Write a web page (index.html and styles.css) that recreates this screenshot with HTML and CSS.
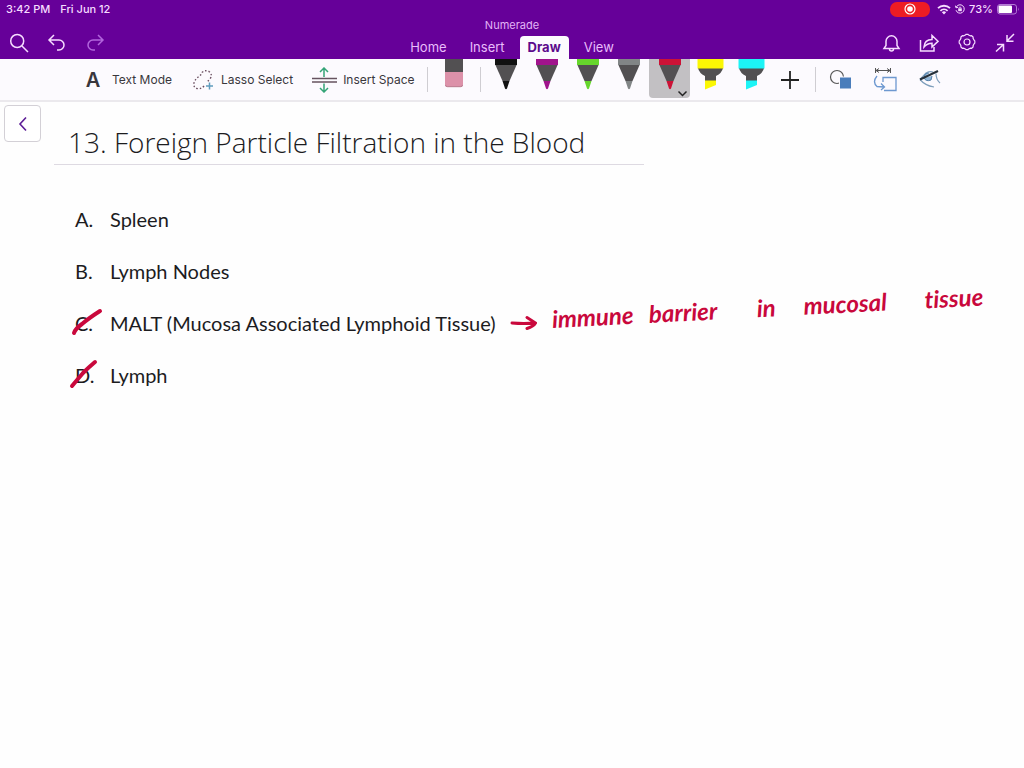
FILE: index.html
```
<!DOCTYPE html>
<html lang="en">
<head>
    <meta charset="UTF-8">
    <meta name="viewport" content="width=device-width, initial-scale=1.0">
    <title>Numerade</title>
    <link rel="stylesheet" href="styles.css">
</head>
<body>
    <header class="header">
        <div class="status">
            <span>3:42 PM</span>
            <span>Fri Jun 12</span>
            <div class="status-right">
                <span class="recording">
                    <svg width="12" height="12" viewBox="0 0 12 12"><circle cx="6" cy="6" r="5" fill="none" stroke="#fff" stroke-width="1.2"/><circle cx="6" cy="6" r="2.8" fill="#fff"/></svg>
                </span>
                <svg width="14" height="11" viewBox="0 0 14 11" fill="none" stroke="#f6dcff" stroke-width="1.8"><path d="M1 4.2a8.6 8.6 0 0 1 12 0M3.4 6.8a5.2 5.2 0 0 1 7.2 0"/><path d="M4.9 8.2 7 10.6l2.1-2.4a3 3 0 0 0-4.2 0z" fill="#f6dcff" stroke="none"/></svg>
                <svg width="10" height="10" viewBox="0 0 10 10" fill="none" stroke="#f6dcff"><path d="M1.2 3.2a4.2 4.2 0 1 1-.2 3M.4 1.6l.6 2.2 2-.5"/><rect x="3.2" y="4.4" width="3.6" height="2.8" fill="#f6dcff" stroke="none"/><path d="M4 4.6V4a1 1 0 0 1 2 0v.6" stroke-width=".8"/></svg>
                <span>73%</span>
                <svg width="23" height="11" viewBox="0 0 23 11"><rect x=".5" y=".5" width="19" height="9.500" rx="2.500" fill="none" stroke="#b47ad6"/><rect x="1.500" y="1.500" width="13.500" height="7.500" rx="1" fill="#fff"/><path d="M21 3.500q1.500 1.700 0 3.500z" fill="#b47ad6"/></svg>
            </div>
        </div>
        <div class="nav">
            <div class="nav-icons">
                <button class="icon-button" aria-label="Search">
                    <svg width="20" height="20" viewBox="0 0 20 20"><circle cx="8.200" cy="8" r="6.500"/><path d="m13 13 6 6"/></svg>
                </button>
                <button class="icon-button" aria-label="Undo">
                    <svg width="20" height="20" viewBox="0 0 20 20"><path d="M7 2 2 7l5 5M2.300 7H12a5 5 0 0 1 0 10h-2"/></svg>
                </button>
                <button class="icon-button dim" aria-label="Redo">
                    <svg width="20" height="20" viewBox="0 0 20 20"><path d="m13 2 5 5-5 5M17.700 7H8a5 5 0 0 0 0 10h2"/></svg>
                </button>
            </div>
            <div class="nav-center">
                <div class="notebook">Numerade</div>
                <nav class="tabs">
                    <button class="tab">Home</button>
                    <button class="tab">Insert</button>
                    <button class="tab active">Draw</button>
                    <button class="tab">View</button>
                </nav>
            </div>
            <div class="nav-icons right">
                <button class="icon-button" aria-label="Notifications">
                    <svg width="20" height="20" viewBox="0 0 20 20"><path d="M3 15.500h15l-2-3V8.300a5.500 5.500 0 0 0-11 0v4.200zM8.500 16a2 2 0 0 0 4 0"/></svg>
                </button>
                <button class="icon-button" aria-label="Share">
                    <svg width="20" height="20" viewBox="0 0 20 20"><path d="M1.500 7v11h13.500v-4M5 14q.5-7.500 8-7.500V2.500l6 5.800-6 5.700v-3.800q-5 0-8 3.800z"/></svg>
                </button>
                <button class="icon-button" aria-label="Settings">
                    <svg width="20" height="20" viewBox="0 0 20 20" class="thin"><path d="m8.300 2.100.7-.8h2l.7.8 1.800.7 1.100-.1 1.500 1.400v1.200l.8 1.700.9.900v2.200l-.9.900-.8 1.700v1.200l-1.500 1.400-1.100-.1-1.800.7-.7.800H9l-.7-.8-1.800-.7-1.100.1-1.500-1.400v-1.200l-.8-1.700-.9-.9V7.900l.9-.9.8-1.700V4.100l1.500-1.400 1.100.1z"/><circle cx="10" cy="9" r="3"/></svg>
                </button>
                <button class="icon-button" aria-label="Exit full screen">
                    <svg width="20" height="20" viewBox="0 0 20 20"><path d="M19 1l-7 7M12 2v6.300h6.500M1 18.500l7.500-7M2 11.500h6.500v7"/></svg>
                </button>
            </div>
        </div>
    </header>

    <div class="toolbar">
        <button class="tool"><span class="letter">A</span>Text Mode</button>
        <button class="tool">
            <svg width="25" height="24" viewBox="0 0 25 24"><path d="M14 18q-3 3.500-7 2.500-4-1.500-3-5.500 1-4 5-6.500 2-1.500 3-4 3-3 7-1 4 3 1 7.500-1.500 1.500-3 3" fill="none" stroke="#6b4f60" stroke-width="1.400" stroke-dasharray="1.500 2"/><path d="M16 18h7M19.500 14.500v7" stroke="#5f9cbd" stroke-width="1.500"/></svg>
            Lasso Select
        </button>
        <button class="tool">
            <svg width="26" height="26" viewBox="0 0 26 26" fill="none"><path d="M1 11.500h25M1 15h25" stroke="#66535f" stroke-width="1.300"/><path d="M13 10V1M9 5l4-4 4 4M13 16.500V25M9 21l4 4 4-4" stroke="#35a477" stroke-width="1.500"/></svg>
            Insert Space
        </button>
        <div class="divider"></div>
        <button class="pen eraser" aria-label="Eraser">
            <svg width="20" height="39" viewBox="0 0 20 39"><path d="M1 0h18v13H1z" fill="#525052"/><path d="M1 13h18v12.500q0 2.500-2.500 2.500h-13Q1 28 1 25.500z" fill="#dc91a9"/><path d="M1.500 26q0 1.700 2 1.700h13q2 0 2-1.700" fill="none" stroke="#b97f91"/></svg>
        </button>
        <div class="divider"></div>
        <div class="pens">
            <button class="pen black" aria-label="Black pen">
                <svg width="41" height="39" viewBox="0 0 41 39"><path class="barrel" d="M10 5h22l-7.500 17h-7z"/><path class="ink" d="M10 0h22v6H10zM17.500 22h7L22 29.500q-1 1.500-2 0z"/></svg>
            </button>
            <button class="pen purple" aria-label="Purple pen">
                <svg width="41" height="39" viewBox="0 0 41 39"><path class="barrel" d="M10 5h22l-7.500 17h-7z"/><path class="ink" d="M10 0h22v6H10zM17.500 22h7L22 29.500q-1 1.500-2 0z"/></svg>
            </button>
            <button class="pen green" aria-label="Green pen">
                <svg width="41" height="39" viewBox="0 0 41 39"><path class="barrel" d="M10 5h22l-7.500 17h-7z"/><path class="ink" d="M10 0h22v6H10zM17.500 22h7L22 29.500q-1 1.500-2 0z"/></svg>
            </button>
            <button class="pen gray" aria-label="Gray pen">
                <svg width="41" height="39" viewBox="0 0 41 39"><path class="barrel" d="M10 5h22l-7.500 17h-7z"/><path class="ink" d="M10 0h22v6H10zM17.500 22h7L22 29.500q-1 1.500-2 0z"/></svg>
            </button>
            <button class="pen red selected" aria-label="Red pen">
                <svg width="41" height="39" viewBox="0 0 41 39"><path class="barrel" d="M10 5h22l-7.500 17h-7z"/><path class="ink" d="M10 0h22v6H10zM17.500 22h7L22 29.500q-1 1.500-2 0z"/><path d="m29.500 32.500 4 4 4-4" fill="none" stroke="#222" stroke-width="1.500"/></svg>
            </button>
            <button class="pen yellow" aria-label="Yellow highlighter">
                <svg width="41" height="39" viewBox="0 0 41 39"><path class="barrel" d="M8 9h25q-1 5-7 8v5H15v-5q-6-3-7-8z"/><path class="ink" d="M7.500 0h26v9.500h-26zM15 21.500h11V26l-11 4.500z"/></svg>
            </button>
            <button class="pen cyan" aria-label="Cyan highlighter">
                <svg width="41" height="39" viewBox="0 0 41 39"><path class="barrel" d="M8 9h25q-1 5-7 8v5H15v-5q-6-3-7-8z"/><path class="ink" d="M7.500 0h26v9.500h-26zM15 21.500h11V26l-11 4.500z"/></svg>
            </button>
        </div>
        <button class="tool add" aria-label="Add pen">
            <svg width="20" height="20" viewBox="0 0 20 20"><path d="M10 1v18M1 10h18" stroke="#222" stroke-width="1.800"/></svg>
        </button>
        <div class="divider"></div>
        <div class="extras">
            <button class="tool" aria-label="Ink to shape">
                <svg width="24" height="24" viewBox="0 0 24 24"><circle cx="9" cy="9" r="6.500" fill="none" stroke="#555" stroke-width="1.200"/><path d="M11 8.500h12v12H11z" fill="#fcfafe"/><path d="M12 9.500h11v11H12z" fill="#4a7dbb"/></svg>
            </button>
            <button class="tool" aria-label="Ink to text">
                <svg width="24" height="24" viewBox="0 0 24 24" fill="none"><path d="M2.500 2.500h15M2.500 0v5M17.500 0v5M6 .5l-3 2 3 2M14 .5l3 2-3 2" stroke="#555"/><path d="M10 14V9.500h13v13H11M4 8q-5 6 0 10.500l7 .5M8 15.500l3.500 3.500-3.500 3" stroke="#6d98d0" stroke-width="1.300"/></svg>
            </button>
            <button class="tool" aria-label="Ink replay">
                <svg width="24" height="24" viewBox="0 0 24 24" fill="none"><path d="M2 11.500 8 5q4-2 7-1M2 11.500q5 6 14 7.500M18 5.500q0 6 4 9.500" stroke="#7d9dbb" stroke-width="1.200"/><path d="M6 10q0-5 5-5M6 10q2 4 7 2l1-4" fill="#8fb4d6" stroke="#4f7ea9"/><path d="M2 11.500 20 3" stroke="#26303a" stroke-width="2"/></svg>
            </button>
        </div>
    </div>

    <main class="page">
        <button class="back" aria-label="Show pages">
            <svg width="10" height="16" viewBox="0 0 10 16"><path d="M8 1.500 2 8l6 6.500" fill="none" stroke="#5c1c96" stroke-width="1.600"/></svg>
        </button>
        <div class="note">
            <h1>13. Foreign Particle Filtration in the Blood</h1>
            <ol class="options">
                <li><span class="mark">A.</span>Spleen</li>
                <li><span class="mark">B.</span>Lymph Nodes</li>
                <li>
                    <span class="mark">C.<svg class="strike" width="36" height="32" viewBox="0 0 36 32"><path d="M5 28q1-4 8-9 7-6 18-13"/></svg></span>MALT (Mucosa Associated Lymphoid Tissue)
                    <svg class="arrow" width="27" height="16" viewBox="0 0 27 16"><path d="M2 8q12 1 23 0M17 2.500 25.500 8q-2 3.500-8.500 5.500"/></svg>
                    <span class="handwriting"><span>immune</span><span>barrier</span><span>in</span><span>mucosal</span><span>tissue</span></span>
                </li>
                <li><span class="mark">D.<svg class="strike" width="36" height="32" viewBox="0 0 36 32"><path d="M3 29q5-6 11-13 6-6 12-11"/></svg></span>Lymph</li>
            </ol>
        </div>
    </main>
</body>
</html>
```
FILE: styles.css
```
* {
    box-sizing: border-box;
}
body {
    margin: 0;
    background-color: #fefefe;
    color: #1c1c1e;
    font-family: Inter, "Liberation Sans", sans-serif;
}
button {
    border: none;
    background: none;
    padding: 0;
    color: inherit;
    font-family: inherit;
    cursor: pointer;
}
svg {
    display: block;
    flex-shrink: 0;
}

/* Purple header */
.header {
    background-color: #660099;
    color: #f6dcff;
}
.status {
    display: flex;
    align-items: center;
    gap: 10px;
    height: 18px;
    padding: 0 4px 0 6px;
    font-size: 11px;
    font-weight: 500;
}
.status-right {
    display: flex;
    align-items: center;
    gap: 4px;
    margin-left: auto;
}
.recording {
    display: flex;
    align-items: center;
    justify-content: center;
    width: 40px;
    height: 15px;
    margin-right: 3px;
    border-radius: 7px;
    background-color: #ed1c24;
}
.nav {
    display: grid;
    grid-template-columns: 1fr auto 1fr;
}
.nav-icons {
    display: flex;
    align-items: center;
    padding-top: 8px;
}
.nav-icons.right {
    justify-content: flex-end;
}
.icon-button {
    display: flex;
    justify-content: center;
    width: 38px;
}
.icon-button svg {
    fill: none;
    stroke: #f6dcff;
    stroke-width: 1.5;
}
.icon-button svg.thin {
    stroke-width: 1.2;
}
.icon-button.dim svg {
    stroke: #b266dd;
}
.notebook {
    height: 18px;
    color: #e2b3f7;
    font-size: 11px;
    line-height: 15px;
    text-align: center;
}
.tabs {
    display: flex;
    gap: 7px;
}
.tab {
    height: 23px;
    padding: 0 8px 2px;
    color: #e9bdfb;
    font-size: 13px;
    border-radius: 4px 4px 0 0;
}
.tab.active {
    background-color: #fcfafe;
    color: #5c0a8c;
    font-weight: 700;
}

/* Draw tools */
.toolbar {
    display: flex;
    align-items: center;
    height: 43px;
    padding-left: 80px;
    background-color: #fcfafe;
    border-bottom: 2px solid #ebe9ed;
}
.tool {
    display: flex;
    align-items: center;
    gap: 6px;
    margin-right: 18px;
    color: #39373c;
    font-size: 12px;
    font-weight: 400;
    white-space: nowrap;
}
.letter {
    width: 26px;
    font-size: 20px;
    font-weight: 600;
    text-align: center;
}
.divider {
    flex-shrink: 0;
    width: 1px;
    height: 25px;
    background-color: #cfcdd2;
}
.tool + .divider {
    margin-left: -6px;
}
.pen {
    align-self: flex-start;
}
.eraser {
    margin: 0 16px;
}
.pens {
    display: flex;
    align-self: flex-start;
    margin-left: 4px;
}
.selected {
    background-color: #c2c0c3;
    border-radius: 0 0 4px 4px;
}
.barrel {
    fill: #525052;
}
.black .ink {
    fill: #111;
}
.purple .ink {
    fill: #a0148c;
}
.green .ink {
    fill: #66d62c;
}
.gray .ink {
    fill: #818586;
}
.red .ink {
    fill: #cc1236;
}
.yellow .ink {
    fill: #fbf704;
}
.cyan .ink {
    fill: #1cf4f6;
}
.add {
    margin-left: 8px;
    margin-right: 21px;
}
.extras {
    display: flex;
    gap: 21px;
    margin-left: 12px;
}
.extras .tool {
    margin-right: 0;
}

/* Note page */
.page {
    display: flex;
    align-items: flex-start;
    padding: 3px 4px;
}
.back {
    display: flex;
    align-items: center;
    justify-content: center;
    flex-shrink: 0;
    width: 37px;
    height: 37px;
    border: 1px solid #d3d0d6;
    border-radius: 4px;
    background-color: #fff;
}
.note {
    flex: 1;
    padding-left: 13px;
    font-family: Lato, "Noto Sans", sans-serif;
}
h1 {
    width: 590px;
    max-width: 100%;
    margin: 0;
    padding: 19px 0 4px 14px;
    border-bottom: 1px solid #dedae2;
    font-family: "Open Sans", "Noto Sans", sans-serif;
    font-size: 28px;
    font-weight: 300;
    line-height: 36px;
    white-space: nowrap;
}
.options {
    display: flex;
    flex-direction: column;
    gap: 28px;
    margin: 0;
    padding: 42px 0 0 21px;
    list-style: none;
    font-size: 20px;
    line-height: 24px;
}
.options li {
    display: flex;
    align-items: center;
    height: 24px;
    white-space: nowrap;
}
.mark {
    position: relative;
    width: 35px;
}

/* Red pen strokes */
.strike,
.arrow {
    fill: none;
    stroke: #c9083c;
    stroke-width: 3;
    stroke-linecap: round;
}
.strike {
    position: absolute;
    top: -6px;
    left: -6px;
    stroke-width: 4;
}
.arrow {
    margin-left: 14px;
}
.handwriting {
    display: grid;
    grid-template-columns: 97px 108px 47px 121px 78px;
    margin-left: 16px;
    padding-bottom: 8px;
    color: #c9083c;
    font-size: 24px;
    font-style: italic;
    font-weight: 700;
    font-variant-ligatures: none;
    transform: rotate(-3deg);
    transform-origin: left bottom;
}
```
